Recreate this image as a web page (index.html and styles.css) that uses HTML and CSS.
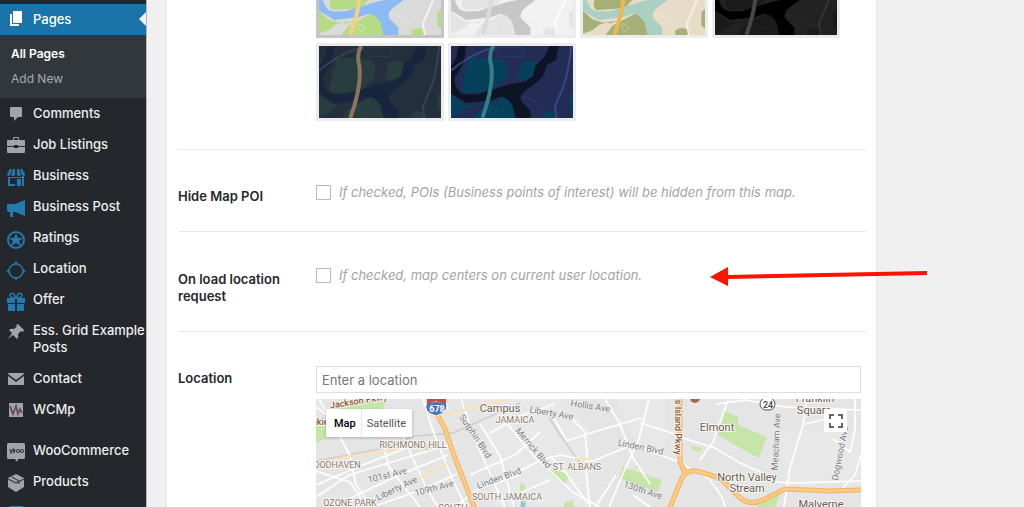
FILE: index.html
```html
<!DOCTYPE html>
<html lang="en">
<head>
<meta charset="utf-8">
<title>Pages</title>
<link rel="stylesheet" href="styles.css">
</head>
<body>
<svg class="defs" aria-hidden="true">
  <symbol id="mini-map" viewBox="0 0 369 219" preserveAspectRatio="none">
    <rect class="land" width="369" height="219"/>
    <path class="green" d="M50 34L100 38 160 42 172 60 168 96 150 112 126 138 40 143 32 130 38 90 50 60ZM196 98L208 80 206 54 240 42 256 54 250 92 215 104ZM0 146L30 172 60 182 110 176 60 190 30 204 0 215ZM56 219L90 190 120 174 168 148 188 165 214 219ZM358 150L369 140V200L358 190ZM278 206Q300 190 318 204V219H280Z"/>
    <path class="water" d="M22 0H45Q42 50 32 62L10 100Q14 140 40 147L80 147 176 117 225 108 248 92 256 60 282 34 298 0H326L318 42 290 58 280 90 262 108 225 135Q206 150 212 168L240 196V219H195L186 180Q170 155 150 154L120 165 46 173Q10 150 0 145V60Q20 40 22 0Z"/>
    <path class="land" d="M10 219L50 187 75 180 90 190 68 219Z"/>
    <path class="fine" d="M130 4H218V32H150ZM215 155Q250 160 280 188M120 184L140 195 128 210 116 200Z"/>
    <path class="minor" d="M0 75Q50 30 125 5M364 0Q355 80 342 118L314 185 320 219"/>
    <path class="main" d="M128 0Q112 25 122 60 130 120 95 219"/>
  </symbol>
</svg>
<div class="shell">
  <nav class="sidebar" aria-label="Admin menu">
    <a class="item current" href="#"><svg class="icon" viewBox="0 0 20 20"><path d="M7 2h9v12H7zM4 5h2v10h7v2H4z"/></svg><span>Pages</span></a>
    <div class="submenu">
      <a class="active" href="#">All Pages</a>
      <a href="#">Add New</a>
    </div>
    <a class="item" href="#"><svg class="icon" viewBox="0 0 20 20"><path d="M5 2h10q1 0 1 1v8q0 1-1 1h-3l-4 4v-4H5q-1 0-1-1V3q0-1 1-1z"/></svg><span>Comments</span></a>
    <a class="item" href="#"><svg class="icon" viewBox="0 0 20 20"><path d="M7 4V2q0-1 1-1h4q1 0 1 1v2h5q1 0 1 1v5h-7V9H8v1H1V5q0-1 1-1zm1 0h4V2H8zM1 11h7v1h4v-1h7v5q0 1-1 1H2q-1 0-1-1z"/></svg><span>Job Listings</span></a>
    <a class="item blue" href="#"><svg class="icon" viewBox="0 0 20 20"><path d="M4 2h2L4 8q-1 2-3 0V7zM7 2h2v6q-2 2-4 0zM11 2h2l2 6q-2 2-4 0zM14 2h2l3 5v1q-1 2-3 0zM2 10h2v7h5v2H2zM4 10h12v1H4zM11 12h4v7h-4zM16 9h2v10h-2z"/></svg><span>Business</span></a>
    <a class="item blue" href="#"><svg class="icon" viewBox="0 0 20 20"><path d="M19 2v16L9 14H7v5H4v-5H2V6h7zM1 6h1v7H1z"/></svg><span>Business Post</span></a>
    <a class="item blue" href="#"><svg class="icon" viewBox="0 0 20 20"><circle class="line" cx="10" cy="11" r="8"/><path d="M10 4l2 5h5l-4 3 2 5-5-3-5 3 2-5-4-3h5z"/></svg><span>Ratings</span></a>
    <a class="item blue" href="#"><svg class="icon" viewBox="0 0 20 20"><circle class="line thin" cx="10" cy="11" r="7"/><path d="M8 4l2-3 2 3zM8 18h4l-2 2zM3 9v4l-3-2zM17 9v4l3-2z"/></svg><span>Location</span></a>
    <a class="item blue" href="#"><svg class="icon" viewBox="0 0 20 20"><path d="M1 7h8v5H1zM11 7h8v5h-8zM2 13h7v7H2zM11 13h7v7h-7z"/><path class="line thin" d="M10 7Q4 7 4 4q1-3 4-1l2 4 2-4q3-2 4 1 0 3-6 3"/></svg><span>Offer</span></a>
    <a class="item" href="#"><svg class="icon" viewBox="0 0 20 20"><path d="M10 3l2-1 6 6-1 2-2-1-3 3q1 3-1 5l-4-4-5 4 4-6-3-3q2-2 5-1l3-3z"/></svg><span>Ess. Grid Example Posts</span></a>
    <a class="item" href="#"><svg class="icon" viewBox="0 0 20 20"><path d="M3 3h14q1 0 1 1l-8 6-8-6q0-1 1-1zM2 6l8 6 8-6v8q0 1-1 1H3q-1 0-1-1z"/></svg><span>Contact</span></a>
    <a class="item" href="#"><svg class="icon" viewBox="0 0 20 20"><path d="M3 2h14v14H3z"/><path class="wave" d="M4 5l3 8 3-8 2 8 2-5 2 4"/></svg><span>WCMp</span></a>
    <a class="item spaced" href="#"><svg class="icon" viewBox="0 0 20 20"><path d="M2 1h16q1 0 1 2v12q0 2-1 2h-6l-1 3-2-3H2q-1 0-1-2V3q0-2 1-2z"/><path class="ink" d="M4 7l1 4 2-4 1 4 1-4"/><circle class="ink" cx="12" cy="9" r="1.5"/><circle class="ink" cx="16" cy="9" r="1.5"/></svg><span>WooCommerce</span></a>
    <a class="item" href="#"><svg class="icon" viewBox="0 0 20 20"><path d="M10 1l8 4v9l-8 5-8-5V5z"/><path class="ink" d="M2 6l8 4 8-4M6 4l7 4v3"/></svg><span>Products</span></a>
    <a class="item blue" href="#" aria-label="More"><svg class="icon" viewBox="0 0 20 20"><path d="M5 2h11q2 0 2 2v14H3V4q0-2 2-2z"/></svg></a>
  </nav>

  <main class="content">
    <form class="card">
      <div class="row skins">
        <div class="field thumbs">
          <button type="button" class="thumb standard selected" aria-label="Standard"><svg><use href="#mini-map"/></svg></button>
          <button type="button" class="thumb silver" aria-label="Silver"><svg><use href="#mini-map"/></svg></button>
          <button type="button" class="thumb retro" aria-label="Retro"><svg><use href="#mini-map"/></svg></button>
          <button type="button" class="thumb dark" aria-label="Dark"><svg><use href="#mini-map"/></svg></button>
          <button type="button" class="thumb night" aria-label="Night"><svg><use href="#mini-map"/></svg></button>
          <button type="button" class="thumb aubergine" aria-label="Aubergine"><svg><use href="#mini-map"/></svg></button>
        </div>
      </div>

      <div class="row poi">
        <label class="name" for="poi">Hide Map POI</label>
        <div class="field check">
          <input type="checkbox" id="poi">
          <label for="poi">If checked, POIs (Business points of interest) will be hidden from this map.</label>
        </div>
      </div>

      <div class="row onload">
        <label class="name" for="onload">On load location request</label>
        <div class="field check">
          <input type="checkbox" id="onload">
          <label for="onload">If checked, map centers on current user location.</label>
        </div>
        <svg class="arrow" viewBox="0 0 217 20" aria-hidden="true"><path d="M0 11L18 1V9L217 5V9L18 13V20Z"/></svg>
      </div>

      <div class="row location">
        <label class="name" for="place">Location</label>
        <div class="field">
          <input class="place" type="text" id="place" placeholder="Enter a location">
          <div class="map">
            <svg class="map-art" viewBox="316 399 545 160" preserveAspectRatio="xMinYMin slice" role="img" aria-label="Map of Queens, New York">
              <rect class="base" x="316" y="399" width="1200" height="300"/>
              <path class="block" d="M480 399H560L590 430 590 507H495ZM616 399H665V455L640 450ZM780 430H861V485H785Z"/>
              <path class="park" d="M316 425L336 412 352 399H386L381 416 350 430 330 437 316 443ZM426 447L432 446 431 451 425 450ZM553 469L570 475 565 484 549 473ZM623 467L662 480 658 492 619 478ZM637 464L640 469 635 468ZM725 411L738 417 738 425 767 437 759 458 742 449 718 435ZM692 445L703 449 698 452 691 449ZM698 458L712 467 707 465ZM752 509L780 493 774 510ZM565 502L573 500 574 510H563ZM520 483L525 485 527 509H521Z"/>
              <path class="pond" d="M521 501L525 503 524 520H520Z"/>
              <path class="rail" d="M316 461L380 449 415 436 453 433 520 403M549 417L558 432 580 463"/>
              <path class="street" d="M316 485L360 466 425 441M316 497L349 475 395 461 455 443M332 507L397 476 448 455M372 507L421 490 457 474M340 437L350 456 356 485 372 507M382 439L389 467 420 507M403 437L427 489 438 507M316 471L350 482 367 507M423 399L433 431 452 478 466 507M461 399L475 440 505 507M480 424L500 456 514 507M500 415L533 455 574 493 600 507M490 433L520 416 555 404M470 475L515 455 540 432M495 484L541 460 560 455 593 461 632 445M566 441L600 430 641 418M553 417L567 441M570 417L585 432 587 455 586 470 590 507M605 399L620 424 633 458 650 484M649 399L638 442 622 476 609 507M616 475L600 500 595 507M640 423L675 434M632 445L680 462M550 456L566 473 588 504M520 493L550 480M455 507L480 488 520 475M633 495L650 507M700 460L713 442 728 400M716 404L745 400 785 407 861 410M680 437L715 448 740 463 772 477M680 463L710 479M807 399L803 425 790 468 784 507M775 482L792 483 861 481M833 439L850 452 855 430 855 399M802 425L830 418M840 491L855 475 861 455M710 480L722 497 725 507M316 407L335 421M319 399L326 411M440 399L449 409"/>
              <path class="yellow" d="M316 464L350 456 405 448M420 478L436 470 451 461M575 459L592 459M443 416L475 407 510 399"/>
              <path class="casing" d="M437 414L445 429 455 458 475 509M680 399V462L685 473M668 512L682 478Q687 468 700 472L720 478 740 498Q752 507 765 499L785 489 830 491 861 490"/>
              <path class="highway" d="M437 414L445 429 455 458 475 509M680 399V462L685 473M668 512L682 478Q687 468 700 472L720 478 740 498Q752 507 765 499L785 489 830 491 861 490"/>
              <g class="road-names">
                <text x="388" y="478" transform="rotate(-14 388 478)">101st Ave</text>
                <text x="398" y="491" transform="rotate(-26 398 491)">Liberty Ave</text>
                <text x="435" y="491" transform="rotate(-15 435 491)">109th Ave</text>
                <text x="473" y="438" transform="rotate(56 473 438)">Sutphin Blvd</text>
                <text x="531" y="450" transform="rotate(50 531 450)">Merrick Blvd</text>
                <text x="500" y="481" transform="rotate(-20 500 481)">Linden Blvd</text>
                <text x="551" y="416" transform="rotate(10 551 416)">Liberty Ave</text>
                <text x="590" y="409" transform="rotate(9 590 409)">Hollis Ave</text>
                <text x="640" y="450" transform="rotate(12 640 450)">Linden Blvd</text>
                <text x="642" y="493" transform="rotate(18 642 493)">130th Ave</text>
                <text x="779" y="442" transform="rotate(-87 779 442)">Meacham Ave</text>
                <text x="843" y="454" transform="rotate(-79 843 454)">Dogwood Ave</text>
              </g>
              <g class="areas">
                <text x="413" y="448">RICHMOND HILL</text>
                <text x="333" y="468">WOODHAVEN</text>
                <text x="350" y="506">OZONE PARK</text>
                <text x="515" y="423">JAMAICA</text>
                <text x="577" y="470">ST. ALBANS</text>
                <text x="507" y="500">SOUTH JAMAICA</text>
                <text x="453" y="511">SOUTH</text>
              </g>
              <g class="towns">
                <text x="500" y="412">Campus</text>
                <text x="717" y="431">Elmont</text>
                <text x="747" y="481">North Valley</text>
                <text x="747" y="492">Stream</text>
                <text x="815" y="402">Franklin</text>
                <text x="814" y="414">Square</text>
                <text x="821" y="508">Malverne</text>
              </g>
              <g class="parkways">
                <text x="359" y="404" transform="rotate(-9 359 404)">Jackson Pkwy</text>
                <text x="318" y="425">ackie</text>
                <text x="675" y="418" transform="rotate(90 675 418)">Cross Island Pkwy</text>
              </g>
              <path class="shield" d="M427 402Q431 404 436 401 442 404 446 402 450 412 436 416 422 412 427 402Z"/>
              <path class="shield-top" d="M427 399H446V403Q441 404 436 401 431 404 427 403Z"/>
              <text class="shield-text" x="437" y="412">678</text>
              <rect class="route" x="760" y="398" width="15" height="12" rx="6"/>
              <text class="route-text" x="768" y="408">24</text>
              <circle class="poi-dot" cx="695" cy="398" r="5"/>
            </svg>
            <div class="map-types">
              <button type="button" class="on">Map</button>
              <button type="button">Satellite</button>
            </div>
            <button type="button" class="full" aria-label="Toggle fullscreen"><svg viewBox="0 0 14 14"><path d="M1 5V1h4M9 1h4v4M13 9v4H9M5 13H1V9"/></svg></button>
          </div>
        </div>
      </div>
    </form>
  </main>
</div>
</body>
</html>
```
FILE: styles.css
```css
* { box-sizing: border-box; }
body {
  margin: 0;
  font-family: Inter, "Liberation Sans", sans-serif;
  font-size: 13px;
  line-height: 17px;
  color: #23282d;
  background: #f0f0f0;
}
button { font: inherit; border: 0; padding: 0; cursor: pointer; }
.defs { position: absolute; width: 0; height: 0; }

.shell { display: flex; height: 100vh; overflow: hidden; }

/* Sidebar */
.sidebar {
  flex: none;
  width: 147px;
  padding-top: 4px;
  background: #24282d;
  border-right: 1px solid #b5b6b7;
}
.item {
  display: flex;
  gap: 7px;
  padding: 7px 0 7px 6px;
  color: #eee;
  font-weight: 500;
  text-decoration: none;
}
.item.current { position: relative; background: #1a74a9; color: #fff; }
.item.current::after {
  content: "";
  position: absolute;
  right: 0;
  top: 8px;
  border: 7px solid transparent;
  border-left-width: 0;
  border-right-color: #f0f0f0;
}
.item.spaced { margin-top: 10px; }
.icon { flex: none; width: 20px; height: 20px; margin-bottom: -3px; fill: #a0a5aa; }
.current .icon { margin-top: -2px; margin-bottom: -1px; fill: #fff; }
.blue .icon { fill: #2479ae; }
.icon .line { fill: none; stroke: #2479ae; stroke-width: 2; }
.icon .thin { stroke-width: 1.5; }
.icon .ink { fill: none; stroke: #3a3e43; stroke-width: 1.2; }
.icon .wave { fill: none; stroke: #6b4765; stroke-width: 1.7; }
.submenu {
  display: flex;
  flex-direction: column;
  gap: 8px;
  padding: 10px 11px 11px;
  background: #32373c;
}
.submenu a { color: #a5aab0; font-size: 12px; text-decoration: none; }
.submenu .active { color: #fff; font-weight: 600; }

/* Settings card */
.content { flex: 1; min-width: 0; padding: 0 147px 0 19px; }
.card {
  margin-top: -60px;
  padding: 0 10px 0 11px;
  background: #fff;
  border: 1px solid #e5e5e5;
}
.row { display: flex; position: relative; border-bottom: 1px solid #e8e8e8; }
.row.location { border-bottom: 0; padding: 34px 0 20px; }
.skins { padding: 19px 0 28px 138px; }
.poi { padding: 34px 0 26px; }
.onload { padding: 35px 0 26px; }
.name { flex: none; width: 138px; padding: 4px 24px 0 0; font-weight: 600; }
.field { flex: 1; min-width: 0; padding-right: 5px; }

.thumbs { display: flex; flex-wrap: wrap; gap: 5px 4px; padding: 0; }
.thumb { width: 128px; height: 78px; border: 3px solid #ececec; background: none; }
.thumb.selected { border-color: #c4c4c4; }
.thumb svg { display: block; width: 100%; height: 100%; }
.land { fill: var(--land); }
.green { fill: var(--green); }
.water { fill: var(--water); }
.minor { fill: none; stroke: var(--minor); stroke-width: 6; stroke-opacity: .7; }
.fine { fill: none; stroke: var(--minor); stroke-width: 2; stroke-opacity: .5; }
.main { fill: none; stroke: var(--main); stroke-width: 12; }
.standard { --land: #dadada; --green: #b5dc84; --water: #8dbaf5; --minor: #fff; --main: #f7d080; }
.silver { --land: #f1f1f1; --green: #e4e4e4; --water: #c6c6c6; --minor: #fff; --main: #dadada; }
.retro { --land: #e6dcc8; --green: #a5b077; --water: #abd0c3; --minor: #fdf7e8; --main: #f2b64c; }
.dark { --land: #222; --green: #1a1a1a; --water: #000; --minor: #3c3c3c; --main: #484848; }
.night { --land: #242f3e; --green: #283d3f; --water: #17263c; --minor: #414b5b; --main: #8c745f; }
.aubergine { --land: #222c54; --green: #06405a; --water: #0c1426; --minor: #43549a; --main: #357f87; }
.night .main { stroke-width: 7; }

.check { display: flex; align-items: flex-start; gap: 8px; color: #a3a3a3; font-style: italic; }
.check input {
  flex: none;
  appearance: none;
  width: 15px;
  height: 15px;
  margin: 1px 0 0;
  border: 1px solid #b9bcbe;
  background: #fff;
}
.arrow { position: absolute; right: -61px; top: 34px; width: 217px; height: 20px; fill: #fb1400; }

.place {
  display: block;
  width: 100%;
  height: 27px;
  padding: 0 5px;
  border: 1px solid #ddd;
  font: inherit;
}
.place::placeholder { color: #72777c; opacity: 1; }

/* Map */
.map { position: relative; margin-top: 6px; overflow: hidden; }
.map-art { display: block; width: 100%; height: 160px; font-family: Roboto, sans-serif; }
.map-art text { text-anchor: middle; paint-order: stroke; stroke: #f7f7f7; stroke-width: 2px; stroke-linejoin: round; }
.base { fill: #e5e5e5; }
.block { fill: #e8e8e8; }
.park { fill: #c6e6a9; }
.pond { fill: #8ebcf3; }
.rail, .street, .yellow, .casing, .highway { fill: none; stroke-linejoin: round; }
.rail { stroke: #cdcdcd; stroke-width: 1.5; }
.street { stroke: #fff; stroke-width: 1.7; }
.yellow { stroke: #fae3b4; stroke-width: 2; }
.casing { stroke: #eeb565; stroke-width: 5; }
.highway { stroke: #fbca83; stroke-width: 3; }
.map-art .road-names text { stroke-width: 1px; }
.road-names { font-size: 9px; fill: #777; }
.areas { font-size: 9px; fill: #8b7a66; }
.towns { font-size: 11px; fill: #6b5d4b; }
.parkways { font-size: 9px; font-weight: 500; fill: #8e552d; }
.shield { fill: #4a74b8; stroke: #fff; }
.shield-top { fill: #c44b4b; }
.map-art .shield-text { font-size: 9px; font-weight: 700; fill: #fff; stroke: none; }
.route { fill: #fff; stroke: #555; }
.map-art .route-text { font-size: 9px; font-weight: 500; fill: #444; stroke: none; }
.poi-dot { fill: #a06c4c; }

.map-types {
  position: absolute;
  left: 10px;
  top: 10px;
  display: flex;
  font-family: Roboto, sans-serif;
  font-size: 11px;
  background: #fff;
  box-shadow: 0 1px 3px rgba(0, 0, 0, .25);
}
.map-types button { height: 28px; padding: 0 6px 0 5px; background: #fff; color: #565656; }
.map-types .on { padding: 0 5px 0 8px; color: #000; font-weight: 500; border-right: 1px solid #e6e6e6; }
.full {
  position: absolute;
  right: 14px;
  top: 10px;
  display: grid;
  place-items: center;
  width: 23px;
  height: 23px;
  background: #fff;
}
.full svg { width: 14px; height: 14px; fill: none; stroke: #666; stroke-width: 2; }
```
